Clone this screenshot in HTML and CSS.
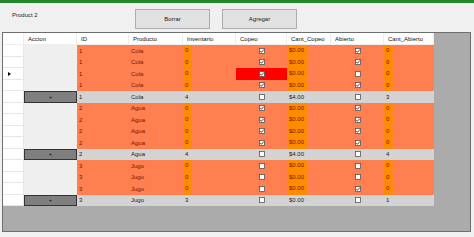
FILE: index.html
```html
<!DOCTYPE html>
<html>

<head>
    <title>Product 2</title>
    <link rel="stylesheet" href="styles.css">
</head>

<body>
    <div id="titlebar"></div>
    <div id="toolbar">
        <div id="label">Product 2</div>
        <button class="action">Borrar</button>
        <button class="action">Agregar</button>
    </div>

    <div id="grid">
        <table>
            <colgroup>
                <col style="width:21px">
                <col style="width:53px">
                <col style="width:52px">
                <col style="width:54px">
                <col style="width:53px">
                <col style="width:51px">
                <col style="width:44px">
                <col style="width:53px">
                <col style="width:50px">
            </colgroup>
            <thead>
                <tr>
                    <th class="rowhead"></th>
                    <th>Accion</th>
                    <th>ID</th>
                    <th>Producto</th>
                    <th>Inventario</th>
                    <th>Copeo</th>
                    <th>Cant_Copeo</th>
                    <th>Abierto</th>
                    <th>Cant_Abierto</th>
                </tr>
            </thead>
            <tbody id="rows"></tbody>
        </table>
    </div>

    <script type="text/javascript">

        //rows of the grid: [id, producto, inventario, copeo, cant_copeo, abierto, cant_abierto, total?]
        let data = [
            [1, 'Cola', 0, 1, '$0.00', 1, 0],
            [1, 'Cola', 0, 1, '$0.00', 1, 0],
            [1, 'Cola', 0, 1, '$0.00', 0, 0],
            [1, 'Cola', 0, 1, '$0.00', 1, 0],
            [1, 'Cola', 4, 0, '$4.00', 0, 3, 'total'],
            [2, 'Agua', 0, 1, '$0.00', 1, 0],
            [2, 'Agua', 0, 1, '$0.00', 1, 0],
            [2, 'Agua', 0, 1, '$0.00', 1, 0],
            [2, 'Agua', 0, 1, '$0.00', 1, 0],
            [2, 'Agua', 4, 0, '$4.00', 0, 4, 'total'],
            [3, 'Jugo', 0, 0, '$0.00', 0, 0],
            [3, 'Jugo', 0, 0, '$0.00', 0, 0],
            [3, 'Jugo', 0, 0, '$0.00', 1, 0],
            [3, 'Jugo', 3, 0, '$0.00', 0, 1, 'total']
        ];

        function checkbox(on) {
            let mark = on ? '<polyline points="1.3,3 2.5,4.3 4.8,1.5" fill="none" stroke="#333" stroke-width="0.9"/>' : '';
            return '<svg class="check" width="6" height="6" viewBox="0 0 6 6"><rect x="0.5" y="0.5" width="5" height="5" fill="#fff" stroke="#555" stroke-width="0.8"/>' + mark + '</svg>';
        }

        function cell(value, total) {
            return total ? value : '<span class="mark">' + value + '</span>';
        }

        let html = '';
        for (let i = 0; i < data.length; i++) {
            let r = data[i];
            let total = r[7] == 'total';
            html += '<tr class="' + (total ? 'total' : 'item') + '">';
            html += '<td class="rowhead">' + (i == 2 ? '<span class="arrow"></span>' : '') + '</td>';
            html += total ? '<td class="accion"><span class="plus">+</span></td>' : '<td class="accion"></td>';
            html += '<td>' + r[0] + '</td>';
            html += '<td class="prod">' + r[1] + '</td>';
            html += '<td>' + cell(r[2], total) + '</td>';
            html += '<td class="center' + (i == 2 ? ' selected' : '') + '">' + checkbox(r[3]) + '</td>';
            html += '<td>' + cell(r[4], total) + '</td>';
            html += '<td class="center">' + checkbox(r[5]) + '</td>';
            html += '<td>' + cell(r[6], total) + '</td>';
            html += '</tr>';
        }
        document.getElementById('rows').innerHTML = html;

    </script>
</body>

</html>
```

FILE: styles.css
```css
body {
    margin: 0;
    width: 474px;
    height: 237px;
    overflow: hidden;
    background-color: #f0f0f0;
    font-family: "Liberation Sans", Arial, sans-serif;
    font-size: 6px;
    color: #111;
}

#titlebar {
    height: 3px;
    background-color: #23862a;
}

#toolbar {
    display: flex;
    height: 29px;
}

#label {
    width: 123px;
    padding-left: 12px;
    padding-top: 9px;
    color: #222;
}

.action {
    width: 75px;
    height: 20px;
    margin-top: 6px;
    margin-right: 12px;
    border: solid #adadad 1px;
    background-color: #e1e1e1;
    font-family: "Liberation Sans", Arial, sans-serif;
    font-size: 6px;
    color: #222;
    padding: 0;
}

#grid {
    box-sizing: border-box;
    margin-left: 2px;
    width: 469px;
    height: 200px;
    border: solid #6e6e6e 1px;
    background-color: #ababab;
    overflow: hidden;
}

table {
    border-collapse: separate;
    border-spacing: 0;
    table-layout: fixed;
    width: 431px;
}

th {
    height: 12px;
    padding: 0 0 0 4px;
    background-color: #fff;
    font-weight: normal;
    text-align: left;
    box-shadow: inset -1px -1px 0 #ededed;
    white-space: nowrap;
    overflow: hidden;
}

td {
    height: 11.5px;
    padding: 0 0 0 2px;
    white-space: nowrap;
    overflow: hidden;
}

tr.item td {
    background-color: #ff7f50;
    color: #7a1000;
}

tr.total td {
    background-color: #d3d3d3;
    color: #222;
}

tr td.rowhead {
    background-color: #fff;
    box-shadow: inset -1px -1px 0 #e6e6e6;
    position: relative;
}

tr.item td.accion {
    background-color: #efefef;
}

tr.total td.accion {
    background-color: #7f7f7f;
    box-shadow: inset 0 0 0 1px #333;
    text-align: center;
    padding: 0;
}

.plus {
    color: #000;
    font-size: 5px;
}

.center {
    text-align: center;
    padding: 0;
}

tr.item td.selected {
    background-color: #ff0000;
}

.check {
    display: block;
    margin: 0 auto;
}

.mark {
    display: inline-block;
    height: 11.5px;
    line-height: 11.5px;
    vertical-align: top;
    margin-left: -3px;
    padding: 0 4px 0 3px;
    background-color: #ff8c00;
    border-radius: 4px;
}

.arrow {
    position: absolute;
    left: 5px;
    top: 3.5px;
    border-left: solid #000 3px;
    border-top: solid transparent 2.5px;
    border-bottom: solid transparent 2.5px;
}
```
